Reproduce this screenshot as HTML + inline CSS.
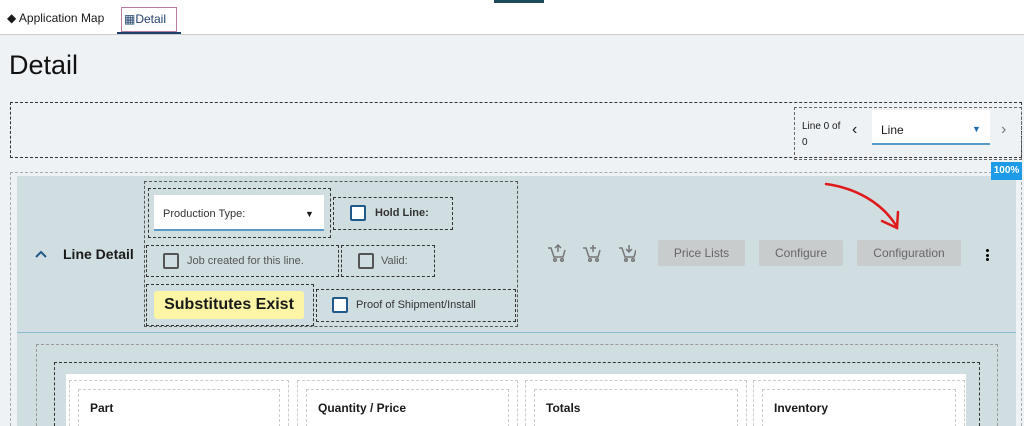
<!DOCTYPE html>
<html style="overflow:hidden;height:426px"><head><style>
*{box-sizing:border-box;margin:0;padding:0}
html,body{width:1024px;height:426px;overflow:hidden}
body{background:#eef2f5;font-family:"Liberation Sans",sans-serif;position:relative;color:#1a1a1a}
.a{position:absolute}
.d{position:absolute;border:1px dashed #333}
.l{position:absolute;border:1px dashed #bbb}
.cb{position:absolute;width:16px;height:16px;border:2px solid #1f5a8a;background:#fff;border-radius:2px}
.cbg{position:absolute;width:16px;height:16px;border:2px solid #555;border-radius:2px}
.btn{position:absolute;top:240px;height:26px;background:#c9cccd;color:#666;font-size:12px;text-align:center;line-height:26px;border-radius:2px}
.col{position:absolute;top:380px;height:46px;border:1px dashed #ccc;border-bottom:none}
.col .in{position:absolute;left:8px;top:8px;right:8px;height:38px;border:1px dashed #ccc;border-bottom:none}
.col b{position:absolute;left:20px;top:20px;font-size:12px}
</style></head><body>
<div class="a" style="left:0;top:0;width:1024px;height:35px;background:#fff;border-bottom:1px solid #ccc"></div>
<div class="a" style="left:494px;top:0;width:50px;height:3px;background:#1f4a5c"></div>
<div class="a" style="left:7px;top:11px;font-size:12px">&#9670; Application Map</div>
<div class="a" style="left:121px;top:7px;width:56px;height:25px;border:1px solid #b77ba0"></div>
<div class="a" style="left:117px;top:32px;width:64px;height:2px;background:#1f3f6a"></div>
<div class="a" style="left:124px;top:12px;font-size:12px;color:#1f3f6a">&#9638;Detail</div>
<div class="a" style="left:9px;top:50px;font-size:27px;color:#111">Detail</div>
<div class="d" style="left:10px;top:102px;width:1012px;height:56px"></div>
<div class="l" style="left:794px;top:107px;width:228px;height:53px;border-color:#666"></div>
<div class="a" style="left:802px;top:119px;font-size:10px;line-height:16px">Line 0 of<br>0</div>
<div class="a" style="left:852px;top:121px;font-size:16px">&#8249;</div>
<div class="a" style="left:872px;top:110px;width:118px;height:35px;background:#fff;border-bottom:2px solid #5a9ac8"></div>
<div class="a" style="left:881px;top:123px;font-size:12px">Line</div>
<div class="a" style="left:972px;top:124px;font-size:9px;color:#1f6aa8">&#9660;</div>
<div class="a" style="left:1001px;top:121px;font-size:16px;color:#777">&#8250;</div>
<div class="l" style="left:10px;top:172px;width:1012px;height:254px;border-color:#aaa;border-bottom:none"></div>
<div class="a" style="left:17px;top:176px;width:999px;height:250px;background:#d0dde1"></div>
<div class="a" style="left:17px;top:332px;width:999px;height:1px;background:#8ab9d0"></div>
<div class="a" style="left:991px;top:162px;width:31px;height:18px;background:#1e9be8;color:#fff;font-size:10px;font-weight:bold;text-align:center;line-height:18px">100%</div>
<svg class="a" style="left:35px;top:250px" width="12" height="8" fill="none" stroke="#1f5a8a" stroke-width="2"><path d="M1 7l5-5 5 5"/></svg>
<div class="a" style="left:63px;top:246px;font-size:14px;font-weight:bold">Line Detail</div>
<div class="d" style="left:144px;top:181px;width:374px;height:146px;border-color:#555"></div>
<div class="d" style="left:148px;top:188px;width:183px;height:50px"></div>
<div class="a" style="left:154px;top:195px;width:170px;height:36px;background:#fff;border-bottom:2px solid #5a9ac8"></div>
<div class="a" style="left:163px;top:208px;font-size:11px;color:#333">Production Type:</div>
<div class="a" style="left:305px;top:209px;font-size:9px">&#9660;</div>
<div class="d" style="left:333px;top:197px;width:120px;height:33px"></div>
<div class="cb" style="left:350px;top:205px"></div>
<div class="a" style="left:375px;top:207px;font-size:11px;font-weight:bold;color:#333">Hold Line:</div>
<div class="d" style="left:146px;top:245px;width:193px;height:32px"></div>
<div class="cbg" style="left:163px;top:253px"></div>
<div class="a" style="left:187px;top:255px;font-size:11px;color:#555">Job created for this line.</div>
<div class="d" style="left:341px;top:245px;width:94px;height:32px"></div>
<div class="cbg" style="left:358px;top:253px"></div>
<div class="a" style="left:381px;top:255px;font-size:11px;color:#555">Valid:</div>
<div class="d" style="left:146px;top:284px;width:168px;height:42px"></div>
<div class="a" style="left:154px;top:291px;width:150px;height:28px;background:#fbf5a5;border-radius:3px;font-size:16px;font-weight:bold;text-align:center;line-height:28px">Substitutes Exist</div>
<div class="d" style="left:316px;top:289px;width:200px;height:33px"></div>
<div class="cb" style="left:332px;top:297px"></div>
<div class="a" style="left:356px;top:299px;font-size:11px;color:#333">Proof of Shipment/Install</div>
<svg class="a" style="left:546px;top:243px" width="90" height="20" fill="none" stroke="#777" stroke-width="1.5">
<g><path d="M2 5h3l3 9h9l2-7"/><circle cx="9" cy="17" r="1.3"/><circle cx="16" cy="17" r="1.3"/><path d="M12 2v7M9 5l3-3 3 3"/></g>
<g transform="translate(35,0)"><path d="M2 5h3l3 9h9l2-7"/><circle cx="9" cy="17" r="1.3"/><circle cx="16" cy="17" r="1.3"/><path d="M12 2v7M9 5h6"/></g>
<g transform="translate(71,0)"><path d="M2 5h3l3 9h9l2-7"/><circle cx="9" cy="17" r="1.3"/><circle cx="16" cy="17" r="1.3"/><path d="M12 2v7M9 6l3 3 3-3"/></g>
</svg>
<div class="btn" style="left:658px;width:87px">Price Lists</div>
<div class="btn" style="left:759px;width:84px">Configure</div>
<div class="btn" style="left:857px;width:104px">Configuration</div>
<div class="a" style="left:986px;top:249px;width:3px;font-size:0">
<div style="width:3px;height:3px;background:#000;border-radius:50%;margin-bottom:1.5px"></div><div style="width:3px;height:3px;background:#000;border-radius:50%;margin-bottom:1.5px"></div><div style="width:3px;height:3px;background:#000;border-radius:50%"></div></div>
<svg class="a" style="left:820px;top:180px" width="90" height="55" fill="none" stroke="#e01a1a" stroke-width="2.5" stroke-linecap="round"><path d="M6 4C35 8 62 22 77 47M62 41l15 7 1-16"/></svg>
<div class="l" style="left:36px;top:344px;width:962px;height:82px;border-color:#999;border-bottom:none"></div>
<div class="d" style="left:54px;top:362px;width:926px;height:64px;border-bottom:none"></div>
<div class="a" style="left:66px;top:374px;width:900px;height:52px;background:#fff"></div>
<div class="col" style="left:69px;width:220px"><div class="in"></div><b>Part</b></div>
<div class="col" style="left:297px;width:221px"><div class="in"></div><b>Quantity / Price</b></div>
<div class="col" style="left:525px;width:222px"><div class="in"></div><b>Totals</b></div>
<div class="col" style="left:753px;width:212px"><div class="in"></div><b>Inventory</b></div>
</body></html>
